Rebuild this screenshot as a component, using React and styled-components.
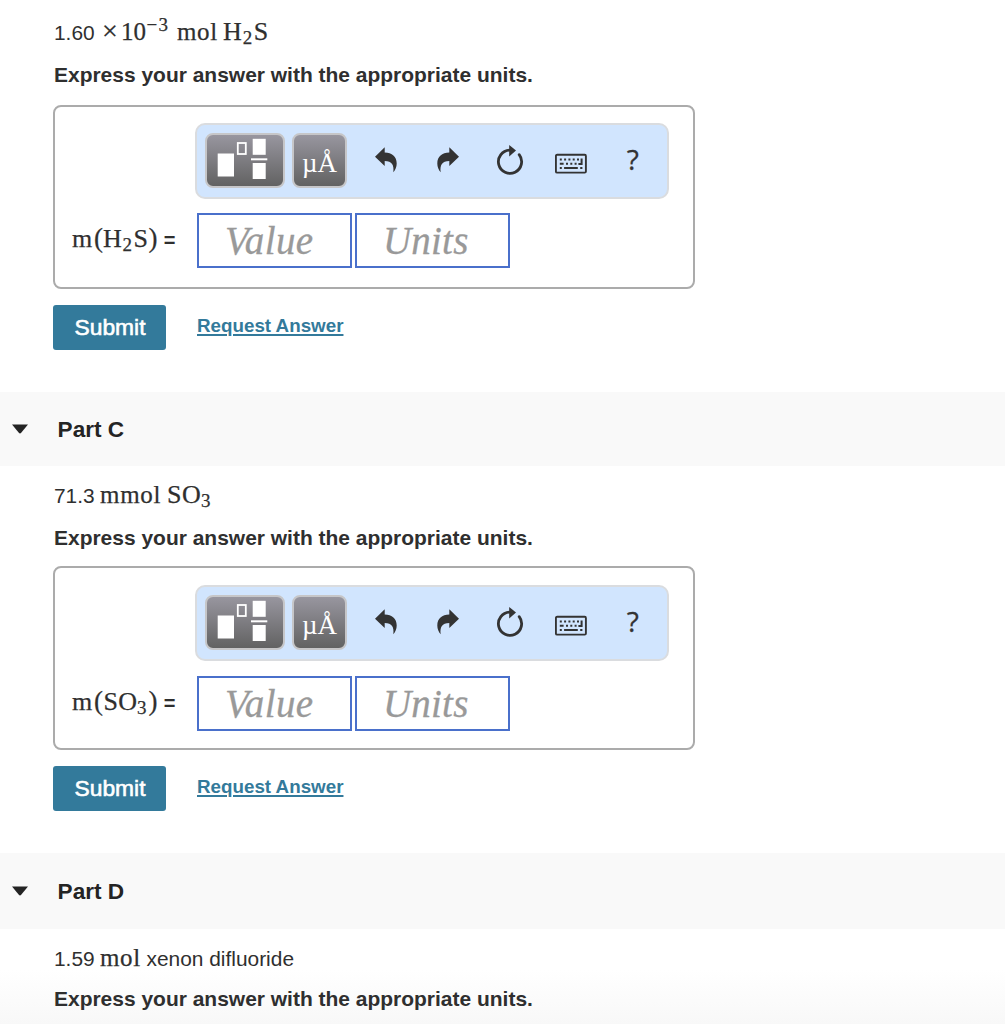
import React from "react";
import styled, { createGlobalStyle } from "styled-components";

const sans = '"Liberation Sans", Arial, sans-serif';
const serif = '"Liberation Serif", "Times New Roman", serif';

const GlobalStyle = createGlobalStyle`
  * { box-sizing: border-box; }
  body { margin: 0; background: #fff; color: #2f2f2f; font-family: ${sans}; }
`;

const Page = styled.main`
  display: flex;
  flex-direction: column;
  height: 1024px;
  overflow: hidden;
  background: linear-gradient(to bottom, #fff 970px, #f8f8f8 1024px);
`;

const Question = styled.section`
  display: flex;
  flex-direction: column;
  flex: none;
  padding-left: 53px;
  height: ${(p) => p.$height}px;
  padding-top: ${(p) => p.$top}px;
`;

const PartHeader = styled.header`
  display: flex;
  flex: none;
  align-items: center;
  height: ${(p) => p.$height}px;
  padding: 0 0 0 11px;
  background: #f9f9f9;
`;

const Caret = styled.svg`
  width: 18px;
  height: 10px;
  fill: #242424;
`;

const PartTitle = styled.h2`
  margin: ${(p) => p.$drop}px 0 0 28.6px;
  font-size: 22.6px;
  line-height: 28px;
  color: #242424;
`;

const Formula = styled.div`
  display: flex;
  align-items: baseline;
  flex: none;
  height: 32px;
  padding-left: ${(p) => p.$indent || 0}px;
  line-height: 32px;
  white-space: pre;
`;

const Roman = styled.span`
  flex: none;
  width: ${(p) => p.$w}px;
  font-family: ${serif};
  font-size: ${(p) => p.$size || 25}px;
  letter-spacing: ${(p) => p.$track || 0}px;
  -webkit-text-stroke: 0.25px currentColor;
`;

const Small = styled(Roman)`
  font-size: 19px;
  line-height: 1;
  transform: translateY(${(p) => p.$shift}px);
`;

const Plain = styled.span`
  flex: none;
  width: ${(p) => p.$w}px;
  font-size: ${(p) => p.$size || 20.9}px;
  font-weight: ${(p) => p.$weight || 400};
`;

const Instruction = styled.p`
  flex: none;
  margin: ${(p) => p.$gap}px 0 0 1px;
  font-size: 20.97px;
  font-weight: 700;
  line-height: 26px;
`;

const AnswerBox = styled.div`
  flex: none;
  width: 642px;
  height: 184px;
  margin-top: ${(p) => p.$gap}px;
  padding: ${(p) => p.$pad}px 0 0 16px;
  border: 2px solid #ababab;
  border-radius: 8px;
  background: #fff;
`;

const Toolbar = styled.div`
  display: flex;
  align-items: center;
  width: 474px;
  height: ${(p) => p.$height}px;
  margin-left: 124px;
  padding: 0 0 2px 8px;
  border: 2px solid #dadcdf;
  border-radius: 10px;
  background: #d1e5fe;
`;

const DarkButton = styled.button`
  display: flex;
  align-items: center;
  justify-content: center;
  flex: none;
  width: ${(p) => p.$w}px;
  height: 55px;
  margin: 0 ${(p) => p.$after}px 0 0;
  padding: ${(p) => p.$drop || 0}px 0 0;
  border: 2px solid #c6c6c8;
  border-radius: 8px;
  background: linear-gradient(#98969f, #626262);
  color: #fff;
  font: 27px/1 ${serif};
`;

const ToolButton = styled.button`
  display: flex;
  align-items: center;
  justify-content: center;
  flex: none;
  width: 61.7px;
  height: 60px;
  padding: 0;
  border: 0;
  background: none;
  color: #333;
  font: 28px/1 "Open Sans", sans-serif;
`;

const HelpButton = styled(ToolButton)`
  padding-bottom: 3px;
  -webkit-text-stroke: 0.3px #333;
`;

const Glyph = styled.svg`
  flex: none;
  width: 32px;
  height: 32px;
  transform: ${(p) => (p.$mirror ? "scaleX(-1)" : "none")};
`;

const TemplateGlyph = styled.svg`
  flex: none;
  width: 52px;
  height: 44px;
  overflow: visible;
`;

const EntryRow = styled.div`
  display: flex;
  align-items: center;
  height: 55px;
  margin-top: ${(p) => p.$gap}px;
`;

const EntryLabel = styled.div`
  width: 126px;
  flex: none;
  padding-bottom: 5px;
`;

const Entry = styled.input`
  flex: none;
  width: 155px;
  height: 55px;
  margin: 0 3px 0 0;
  padding: 0 0 0 ${(p) => p.$pad}px;
  border: 2px solid #4a70cb;
  border-radius: 0;
  background: #fff;
  font: italic 39px/1 ${serif};
  letter-spacing: ${(p) => p.$track}px;
  &::placeholder { color: #999; opacity: 1; -webkit-text-stroke: 0.3px #999; }
`;

const Actions = styled.div`
  display: flex;
  flex: none;
  margin-top: 16px;
  height: 45px;
  align-items: center;
`;

const Submit = styled.button`
  width: 113px;
  height: 45px;
  padding: 0 0 0 1px;
  border: 0;
  border-radius: 3px;
  background: #337a9b;
  color: #fff;
  font: 22.8px/45px ${sans};
  -webkit-text-stroke: 0.6px #fff;
`;

const RequestLink = styled.a`
  margin: -4px 0 0 31px;
  color: #337a9b;
  font-size: 18.8px;
  font-weight: 700;
  line-height: 24px;
  text-decoration: underline;
  text-decoration-thickness: 1.5px;
  text-underline-offset: 2px;
`;

function TemplatesIcon() {
  return (
    <TemplateGlyph viewBox="0 0 52 44" fill="#fff">
      <rect x="-1.3" y="15.5" width="16.3" height="23" />
      <rect x="18.8" y="5" width="8" height="11" fill="none" stroke="#fff" strokeWidth="1.8" />
      <rect x="33.7" y="0.8" width="13" height="16" />
      <rect x="32" y="20.3" width="16.3" height="2" />
      <rect x="33.7" y="25" width="13" height="16" />
    </TemplateGlyph>
  );
}

function CurvedArrow({ mirror }) {
  return (
    <Glyph viewBox="0 0 32 32" fill="#333" $mirror={mirror}>
      <path d="M5 12.7 14.7 3.3V8.5C22 8.8 26.7 12.5 26.7 19.5C26.7 23 25.4 26 23.3 28.3C24.2 21 22 17.3 14.7 17V22Z" />
    </Glyph>
  );
}

function ResetIcon() {
  return (
    <Glyph viewBox="0 0 32 32">
      <path d="M25.2 10.7A11.6 11.6 0 1 1 15.5 6.2" fill="none" stroke="#333" strokeWidth="2.8" strokeLinecap="round" />
      <path d="M15.2 1 22 6.6 15.2 12.4Z" fill="#333" />
    </Glyph>
  );
}

function KeyboardIcon() {
  return (
    <Glyph viewBox="0 0 32 32" fill="none" stroke="#333">
      <rect x="0.9" y="10.8" width="30" height="17.8" rx="1.2" strokeWidth="1.9" />
      <path d="M4.8 15.5H6.8M9.1 15.5H11.1M13.4 15.5H15.4M17.7 15.5H19.7M22 15.5H24" strokeWidth="2" />
      <path d="M4.8 19.8H8.6M11 19.8H13M15.3 19.8H17.3M19.6 19.8H21.6" strokeWidth="2" />
      <path d="M26.6 14.4V19.9H23.4" strokeWidth="2" />
      <path d="M4.8 24.1H6.8M9.1 24.1H22.8M25.2 24.1H27.4" strokeWidth="2" />
    </Glyph>
  );
}

function AnswerForm({ label, gap, pad, barHeight, entryGap }) {
  return (
    <>
      <AnswerBox $gap={gap} $pad={pad}>
        <Toolbar $height={barHeight}>
          <DarkButton $w={80} $after={7} aria-label="Templates"><TemplatesIcon /></DarkButton>
          <DarkButton $w={55} $after={8.3} $drop={7} aria-label="Symbols">µÅ</DarkButton>
          <ToolButton aria-label="Undo"><CurvedArrow /></ToolButton>
          <ToolButton aria-label="Redo"><CurvedArrow mirror /></ToolButton>
          <ToolButton aria-label="Reset"><ResetIcon /></ToolButton>
          <ToolButton aria-label="Keyboard"><KeyboardIcon /></ToolButton>
          <HelpButton aria-label="Help">?</HelpButton>
        </Toolbar>
        <EntryRow $gap={entryGap}>
          <EntryLabel>{label}</EntryLabel>
          <Entry placeholder="Value" $pad={26} $track={0.35} />
          <Entry placeholder="Units" $pad={26} $track={0.2} />
        </EntryRow>
      </AnswerBox>
      <Actions>
        <Submit>Submit</Submit>
        <RequestLink>Request Answer</RequestLink>
      </Actions>
    </>
  );
}

const prompt = "Express your answer with the appropriate units.";

export default function App() {
  return (
    <Page>
      <GlobalStyle />
      <Question $top={15} $height={392}>
        <Formula $indent={1}>
          <Plain $w={48}>1.60</Plain>
          <Roman $w={19} $size={28}>×</Roman>
          <Roman $w={25.5}>10</Roman>
          <Small $w={30.5} $shift={-9} $track={1.2}>−3</Small>
          <Roman $w={46} $track={0.6}>mol</Roman>
          <Roman $w={19.8} $size={26}>H</Roman>
          <Small $w={11} $shift={4}>2</Small>
          <Roman $w={16} $size={26}>S</Roman>
        </Formula>
        <Instruction $gap={15}>{prompt}</Instruction>
        <AnswerForm
          gap={17}
          pad={16}
          barHeight={76}
          entryGap={14}
          label={
            <Formula $indent={1}>
              <Roman $w={22} $size={26}>m</Roman>
              <Roman $w={9} $size={27}>(</Roman>
              <Roman $w={19.5} $size={26}>H</Roman>
              <Small $w={11} $shift={4}>2</Small>
              <Roman $w={15} $size={26}>S</Roman>
              <Roman $w={15.2} $size={27}>)</Roman>
              <Plain $w={14} $size={20} $weight={700}>=</Plain>
            </Formula>
          }
        />
      </Question>
      <PartHeader $height={74}>
        <Caret viewBox="0 0 18 10"><path d="M1 0.5H17L10.2 8.8Q9 10 7.8 8.8Z" /></Caret>
        <PartTitle $drop={1}>Part C</PartTitle>
      </PartHeader>
      <Question $top={13} $height={387}>
        <Formula $indent={1}>
          <Plain $w={46}>71.3</Plain>
          <Roman $w={67} $track={0.7}>mmol</Roman>
          <Roman $w={34} $track={0.5} $size={26}>SO</Roman>
          <Small $w={10} $shift={4}>3</Small>
        </Formula>
        <Instruction $gap={14}>{prompt}</Instruction>
        <AnswerForm
          gap={15}
          pad={17}
          barHeight={76}
          entryGap={14.5}
          label={
            <Formula $indent={1}>
              <Roman $w={22} $size={26}>m</Roman>
              <Roman $w={9.5} $size={27}>(</Roman>
              <Roman $w={33.5} $track={0.3} $size={26}>SO</Roman>
              <Small $w={11.5} $shift={4}>3</Small>
              <Roman $w={15.2} $size={27}>)</Roman>
              <Plain $w={14} $size={20} $weight={700}>=</Plain>
            </Formula>
          }
        />
      </Question>
      <PartHeader $height={76}>
        <Caret viewBox="0 0 18 10"><path d="M1 0.5H17L10.2 8.8Q9 10 7.8 8.8Z" /></Caret>
        <PartTitle $drop={2}>Part D</PartTitle>
      </PartHeader>
      <Question $top={13} $height={95}>
        <Formula $indent={1}>
          <Plain $w={46}>1.59</Plain>
          <Roman $w={46.5} $track={0.6}>mol</Roman>
          <Plain $w={160}>xenon difluoride</Plain>
        </Formula>
        <Instruction $gap={12}>{prompt}</Instruction>
      </Question>
    </Page>
  );
}
